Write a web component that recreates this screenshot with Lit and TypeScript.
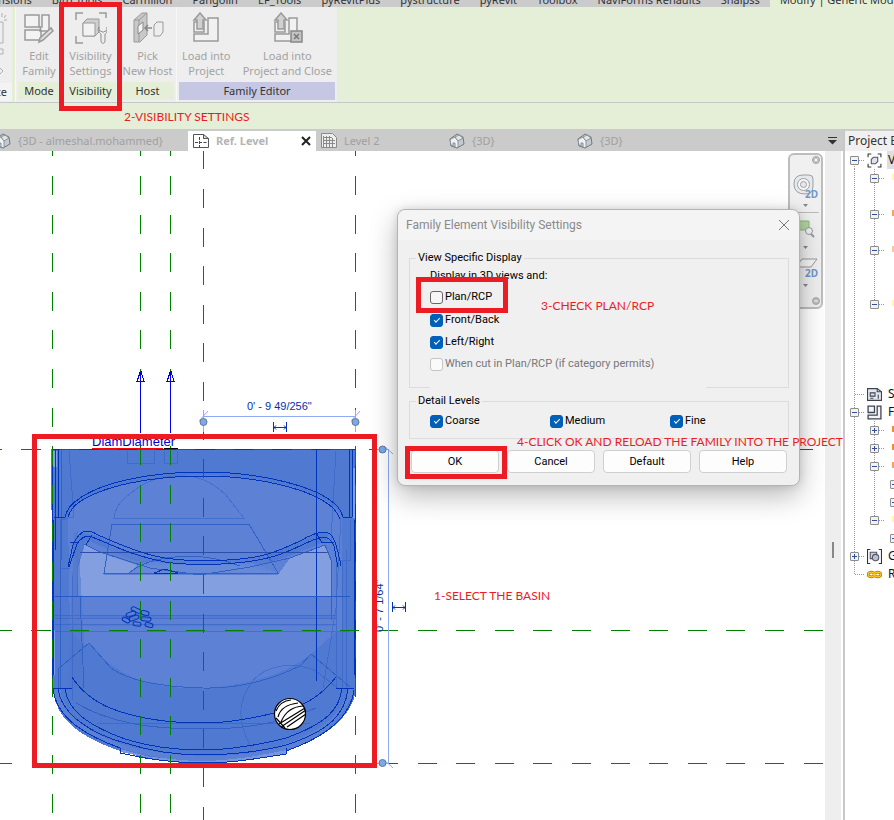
import { LitElement, html, css, svg, nothing } from "lit";
import { customElement } from "lit/decorators.js";
import { classMap } from "lit/directives/class-map.js";

const houseIcon = html`<svg class="ico16" viewBox="0 0 16 16">
  <path d="M1 6 8 1l6 3 1 7-7 4-6-2z" fill="#c4cad0" stroke="#6f7880" />
  <path d="M1 6.500 6 4l3 4v7l-3-1v-4H4v3l-2-1z" fill="#eef0f2" stroke="#7b848c" stroke-width=".8" />
  <path d="M6 4 10 2l4 3-5 3z" fill="#e2e5e8" stroke="#7b848c" stroke-width=".8" />
</svg>`;

const planIcon = html`<svg class="ico16" viewBox="0 0 16 16">
  <path d="M.5 1.500h10v4h5v9H.5z" fill="#fff" stroke="#555" />
  <path d="M10.500 1.500l5 4h-5z" fill="#ddd" stroke="#555" />
  <path d="M2 9.500h3M7 9.500h2M10.500 9.500h3" stroke="#444" fill="none" />
  <path d="M6.500 4v10" stroke="#444" fill="none" stroke-dasharray="3 1" />
</svg>`;

const levelIcon = html`<svg class="ico16" viewBox="0 0 16 16">
  <path d="M.5.500h11l4 4v10h-15z" fill="#eee" stroke="#8a8a8a" />
  <path d="M2.500 3v11M5.500 3v11M8.500 3v11M11.500 5v9M2 4.500h9M2 7.500h12M2 10.500h12" stroke="#8a8a8a" fill="none" />
</svg>`;

const ribbonIcons = {
  edit: html`<svg class="ico32" viewBox="0 0 32 32">
    <g fill="#f3f3f3" stroke="#9a9a9a" stroke-width="1.500">
      <path d="M2 3h14v12H2zM19 3h7v16h-8l-1-4h2zM2 18h14l2 2v8H2z" />
      <path d="m16 30 1-4 11-10 2 3-10 9z" fill="#ddd" />
    </g>
  </svg>`,
  visibility: html`<svg class="ico32" viewBox="0 0 32 32">
    <path d="M1 8V1h7M24 1h7v5M1 24v7h7" fill="none" stroke="#9a9a9a" stroke-width="1.500" />
    <path d="m8 11 4-4h12v13l-4 4H8z" fill="#d0d0d0" stroke="#9a9a9a" />
    <path d="M8 11h12v13H8z" fill="#f2f2f2" stroke="#9a9a9a" />
    <path d="M24 15c-2 3 0 6 2 7v7c0 3 4 3 4 0v-7c2-1 4-4 2-7v4h-2l-1 1h-2l-1-1h-2z" fill="#eee" stroke="#8f8f8f" />
  </svg>`,
  pick: html`<svg class="ico32" viewBox="0 0 32 32">
    <path d="m2 8 8-7h5v22l-7 7H2z" fill="#c8c8c8" stroke="#999" />
    <path d="M2 8h5l8-7M7 8v22" fill="none" stroke="#999" />
    <path d="m6 14 5-4v8l-5 4z" fill="#f3f3f3" stroke="#888" />
    <path d="M13 16h7M16 13l-3 3 3 3" fill="none" stroke="#888" stroke-width="1.500" />
    <path d="m22 13 3-3h6v10l-3 4h-6z" fill="#eee" stroke="#999" />
  </svg>`,
  load: html`<svg class="ico32" viewBox="0 0 32 32">
    <g fill="#f1f1f1" stroke="#9a9a9a" stroke-width="1.500">
      <path d="M4 10h10v10H4zM18 6h10v23H4v-7h14z" />
      <path d="M7 17V8H4l6-7 6 7h-3v9z" fill="#d0d0d0" />
    </g>
  </svg>`,
  loadClose: html`<svg class="ico32" viewBox="0 0 32 32">
    <g fill="#f1f1f1" stroke="#9a9a9a" stroke-width="1.500">
      <path d="M4 10h10v10H4zM18 6h8v23H4v-7h14z" />
      <path d="M7 17V8H4l6-7 6 7h-3v9z" fill="#d0d0d0" />
      <path d="M20 19h11v11H20z" fill="#c4c4c4" stroke="#888" />
      <path d="m23 22 5 5M28 22l-5 5" stroke="#777" />
    </g>
  </svg>`,
};

interface TreeRow {
  level?: number;
  open?: boolean;
  icon?: unknown;
  text?: string;
  rails: [string, string];
  mark?: string;
  selected?: boolean;
}

const cubeIcon = html`<svg class="ico14" viewBox="0 0 14 14"><path d="M1 4V1h3M10 1h3v3M1 10v3h3M10 13h3v-3" fill="none" stroke="#333" /><path d="m4 6 2-2h4v4l-2 2H4z" fill="#dde3ec" stroke="#556" /></svg>`;
const sheetIcon = html`<svg class="ico14" viewBox="0 0 14 14"><path d="M.5 1.500h9l4 3v8H.5z" fill="#e4e9f0" stroke="#3d4450" /><path d="M9.500 1.500v3h4M3 5.500h4.500v3H3zM3 10.500h3M10.500 7v4" fill="none" stroke="#3d4450" /></svg>`;
const familyIcon = html`<svg class="ico14" viewBox="0 0 14 14"><path d="M1 1h6v6H1zM9.500 1h3.500v12H1V9.500h8.500z" fill="#f2f4f8" stroke="#3d4450" stroke-width="1.200" /></svg>`;
const groupIcon = html`<svg class="ico14" viewBox="0 0 14 14"><path d="M3 .5H.5v13H3M11 .5h2.500v13H11" fill="none" stroke="#333" /><path d="M3 3h6v6H3z" fill="#c9d0db" stroke="#556" /><circle cx="8" cy="8" r="3" fill="#b9c2d0" stroke="#556" /></svg>`;
const linkIcon = html`<svg class="ico14" viewBox="0 0 14 14"><g fill="none" stroke="#a87400" stroke-width="2.600"><ellipse cx="4" cy="7" rx="3" ry="2.200" /><ellipse cx="10" cy="7" rx="3" ry="2.200" /></g><g fill="none" stroke="#ffc828"><ellipse cx="4" cy="7" rx="3" ry="2.200" /><ellipse cx="10" cy="7" rx="3" ry="2.200" /><path d="M5 7h4" /></g></svg>`;

const child = (open: boolean | undefined, last: boolean, mark: string): TreeRow =>
  ({ level: 1, open, rails: ["full", last ? "top" : "full"], mark });
const blank = (r1 = "full"): TreeRow => ({ rails: ["full", r1] });
const leaf = (): TreeRow => ({ level: 2, open: false, rails: ["full", "full"] });

const treeRows: TreeRow[] = [
  { level: 0, open: true, icon: cubeIcon, text: "Views (all)", rails: ["low", ""], selected: true },
  child(true, false, "#fff6b0"), blank(),
  child(true, false, "#f2a65a"), blank(),
  child(true, false, "#f5c9a0"), blank(), blank(),
  child(true, true, "#fff6b0"), blank(""), blank(""), blank(""), blank(""),
  { level: 0, icon: sheetIcon, text: "Sheets (all)", rails: ["full", ""] },
  { level: 0, open: true, icon: familyIcon, text: "Families", rails: ["full", ""] },
  child(false, false, "#e8912f"), child(false, false, "#e8912f"), child(true, false, "#f2a65a"),
  leaf(), leaf(),
  child(true, true, "#fff6b0"),
  { level: 2, open: false, rails: ["full", ""] },
  { level: 0, open: false, icon: groupIcon, text: "Groups", rails: ["full", ""] },
  { level: 0, icon: linkIcon, text: "Revit Links", rails: ["top", ""] },
];

@customElement("project-browser")
export class ProjectBrowser extends LitElement {
  static styles = css`
    :host { display: flex; flex-direction: column; background: #fff; overflow: hidden; }
    .title { height: 20px; flex: none; background: #f0f0f0; color: #333; font-size: 12px; line-height: 20px; padding-left: 3px; white-space: nowrap; }
    .row { display: flex; height: 18px; align-items: stretch; white-space: nowrap; font-size: 12px; line-height: 18px; color: #111; }
    .cell { flex: 0 0 20px; display: flex; align-items: center; position: relative; }
    .cell::before { content: ""; position: absolute; left: 9px; top: 0; bottom: 0; width: 1px; }
    .full::before, .top::before, .low::before { background: repeating-linear-gradient(#999 0 1px, transparent 1px 2px); }
    .top::before { bottom: 9px; }
    .low::before { top: 9px; }
    .stub::after { content: ""; position: absolute; left: 10px; right: 0; top: 9px; height: 1px; background: repeating-linear-gradient(90deg, #999 0 1px, transparent 1px 2px); }
    .toggle { position: relative; z-index: 1; width: 9px; height: 9px; margin: 1px 0 0 5px; padding: 0; border: 1px solid #8c8c8c; border-radius: 1px; background: linear-gradient(#2f4f9a, #2f4f9a) center / 5px 1px no-repeat #f3f3f3; }
    .plus { background: linear-gradient(#2f4f9a, #2f4f9a) center / 5px 1px no-repeat, linear-gradient(#2f4f9a, #2f4f9a) center / 1px 5px no-repeat #f3f3f3; }
    .ico14 { width: 15px; height: 15px; margin: 0 5px 0 2px; flex: none; align-self: center; }
    .name { padding-left: 1px; }
    .selected { background: #dedede; }
    .mark { width: 6px; height: 6px; margin: 5px 0 0 7px; flex: none; }
  `;
  private cell(i: number, r: TreeRow) {
    const here = r.level === i;
    const rail = i < 2 ? r.rails[i] : "";
    return html`<span class=${classMap({ cell: true, full: rail === "full", top: rail === "top", low: rail === "low", stub: here })}>
      ${here && r.open !== undefined
        ? html`<button class=${classMap({ toggle: true, plus: !r.open })} aria-label=${r.open ? "Collapse" : "Expand"}></button>`
        : nothing}</span>`;
  }
  render() {
    return html`<div class="title">Project Browser</div>
      ${treeRows.map((r) => html`<div class="row">
        ${this.cell(0, r)}
        ${r.level === 0 ? html`${r.icon}<span class=${classMap({ name: true, selected: !!r.selected })}>${r.text}</span>` : html`${this.cell(1, r)}`}
        ${r.level === 2 ? this.cell(2, r) : nothing}
        ${r.mark ? html`<svg class="mark" viewBox="0 0 6 6"><rect width="6" height="6" fill=${r.mark} /></svg>` : nothing}
      </div>`)}`;
  }
}

@customElement("visibility-dialog")
export class VisibilityDialog extends LitElement {
  static styles = css`
    :host { display: block; box-sizing: border-box; background: #f0f0f0; border: 1px solid #b4b4b4; border-radius: 8px; box-shadow: 0 10px 28px rgba(0, 0, 0, 0.28), 0 0 8px rgba(0, 0, 0, 0.12); font: 11px/16px Roboto, sans-serif; color: #000; }
    header { display: flex; justify-content: space-between; align-items: center; height: 30px; padding: 0 9px 0 8px; background: #f4f4f4; border-radius: 8px 8px 0 0; }
    h1 { margin: 0; font: 12px/16px Roboto, sans-serif; color: #8a8a8a; }
    .close { border: 0; padding: 0; background: none; width: 12px; height: 12px; }
    .close svg { display: block; width: 12px; height: 12px; }
    .body { padding: 10px 10px 12px 11px; }
    fieldset { position: relative; box-sizing: border-box; margin: 0; border: 1px solid #dcdcdc; padding: 0 20px; min-width: 0; }
    legend { margin-left: -14px; padding: 0 2px; line-height: 16px; }
    .views { height: 138px; }
    .views::after { content: ""; position: absolute; left: 20px; right: 82px; bottom: -1px; height: 1px; background: #f0f0f0; }
    .levels { height: 46px; margin-top: 5px; }
    p { margin: 2px 0; line-height: 16px; }
    .check { display: flex; align-items: center; gap: 2px; height: 22px; width: max-content; white-space: nowrap; }
    .off { color: #777; }
    input { appearance: none; box-sizing: border-box; width: 13px; height: 13px; margin: 0; border: 1px solid #666; border-radius: 3px; background: #f6f6f6; display: grid; place-items: center; }
    input:checked { background: #005fb8; border-color: #005fb8; }
    input:checked::after { content: ""; width: 5px; height: 2px; border: solid #fff; border-width: 0 0 1px 1px; transform: rotate(-45deg); margin-bottom: 2px; }
    input:disabled { border-color: #c4c4c4; background: #fafafa; }
    .detail { display: grid; grid-template-columns: repeat(3, 120px); padding-top: 1px; }
    .buttons { display: grid; grid-template-columns: repeat(4, 1fr); gap: 8px; margin: 11px 2px 0; }
    .buttons button { height: 23px; border: 1px solid #cfcfcf; border-radius: 4px; background: #fdfdfd; padding: 0; font: inherit; color: #000; }
    .target { position: relative; width: max-content; margin-bottom: 1px; }
    .mark { position: absolute; border: 5px solid #ed1c24; pointer-events: none; }
    .markPlan { left: -14px; top: -9px; width: 82px; height: 26px; }
    .okCell { position: relative; display: grid; }
    .markOk { left: -6px; top: -4px; right: -8px; height: 23px; }
    .note { position: absolute; color: #ed1c24; font: 12px/16px Lato, sans-serif; white-space: nowrap; }
    .note3 { left: 143px; top: 88px; }
    .note4 { left: 119px; top: 224px; }
  `;
  private check(label: string, checked: boolean, disabled = false) {
    return html`<label class=${classMap({ check: true, off: disabled })}><input type="checkbox" .checked=${checked} ?disabled=${disabled} />${label}</label>`;
  }
  render() {
    return html`
      <header><h1>Family Element Visibility Settings</h1>
        <button class="close" aria-label="Close"><svg viewBox="0 0 12 12"><path d="m1 1 10 10M11 1 1 11" stroke="#777" fill="none" /></svg></button>
      </header>
      <div class="body">
        <fieldset class="views"><legend>View Specific Display</legend>
          <p>Display in 3D views and:</p>
          <div class="target">${this.check("Plan/RCP", false)}<span class="mark markPlan"></span></div>
          ${this.check("Front/Back", true)} ${this.check("Left/Right", true)}
          ${this.check("When cut in Plan/RCP (if category permits)", false, true)}
        </fieldset>
        <fieldset class="levels"><legend>Detail Levels</legend>
          <div class="detail">${this.check("Coarse", true)}${this.check("Medium", true)}${this.check("Fine", true)}</div>
        </fieldset>
        <div class="buttons">
          <div class="okCell"><button>OK</button><span class="mark markOk"></span></div>
          <button>Cancel</button><button>Default</button><button>Help</button>
        </div>
      </div>
      <span class="note note3">3-CHECK PLAN/RCP</span>
      <span class="note note4">4-CLICK OK AND RELOAD THE FAMILY INTO THE PROJECT</span>`;
  }
}

const rearLip = "M65 517 Q68 506 76 501 C100 482 150 472 203 472 C262 472 318 487 336 505 Q341 510 343 517";
const rearLipInner = "M68 517 Q71 508 78 503 C102 486 150 476 203 476 C260 476 314 490 333 508 Q338 513 340 519";
const frontLip = "M68 567 L73 545 Q79 532 86 531 Q92 531 98 535 C150 558 165 560 203 561 C265 560 275 552 300 541 C312 534 325 528 331 535 Q336 540 341 566";
const frontLipInner = "M69 567 L77 544 Q82 536 89 536 C110 543 125 554 165 562 C200 567 250 564 275 556 C300 548 312 538 324 537 Q331 538 334 546 L338 567";

/* Drain slots: centre, half width and tilt of each one. */
const slots = [[136, 610, 5, 25], [145, 613, 4, 15], [131, 614, 5, -20], [134, 618, 5, -20], [126, 620, 4, 30], [146, 619, 5, 5], [137, 624, 4, 10], [149, 625, 4, 15]];

@customElement("model-view")
export class ModelView extends LitElement {
  static styles = css`
    :host { display: block; overflow: hidden; background: #fff; }
    .drawing { display: block; width: 100%; height: 100%; }
    .ref { stroke: #008000; stroke-width: 1; stroke-dasharray: 19 19.600; fill: none; }
    .ink { stroke: #0034b8; fill: none; }
    .faint { stroke: #3262c6; fill: none; }
    .soft { opacity: 0.55; }
    .dim { stroke: #8fabf5; fill: none; }
    .grip { fill: #79aaf0; stroke: #68768c; }
    .label { font: 11px "Liberation Sans", Arial, sans-serif; fill: #0033a8; }
    .diam { font: 13px "Liberation Sans", Arial, sans-serif; fill: #0000cc; }
    .note { font: 12px Lato, sans-serif; fill: #ed1c24; }
  `;
  render() {
    const grips = [[203.5, 422], [355.5, 422], [382.5, 449.5], [382.5, 763]];
    return html`<svg class="drawing"><g transform="translate(0 -151)">
      <g shape-rendering="crispEdges">
        <path fill="#5079d1" d="M51 449H356V690C352 720 320 740 286 751C262 759 230 763 203 763S150 761 120 751C80 737 56 720 53 690Z" />
        <path fill="#5c81d5" d="M68 517C74 490 150 475 203 475S330 490 342 517V632H336L311 654C290 672 250 686 203 688S115 678 89 643L84 646 70 630Z" />
        <path fill="#5079d1" d="M77 566 85 541 90 541C130 560 150 570 203 571S290 556 328 540V532L318 533C275 555 250 561 203 561S130 555 98 536L82 533 73 548Z" />
        <path fill="#839fe0" d="M77 570 84 544 100 552 137 565 129 573H104L104 575H278L290 558 325 545 331 560V596H78Z" />
        <path fill="#6689d8" d="M129 573 145 562 203 564 252 563 278 573Z" />
        <path fill="#5c81d5" d="M104 573 112 524 249 524 278 573 240 565H160L137 565 106 555Z" opacity=".5" />
        <path fill="#4e76cc" d="M55 615H336V618H55zM55 624H336V626H55zM74 533 78 531 84 640 80 688H68z" opacity=".55" />
        <path fill="#7697df" d="M120 749 150 757 203 761 286 750V754L240 761 203 764 170 762 120 752Z" />
        <path fill="#5b80d4" d="M53 690Q58 718 90 735L120 748C150 758 180 761 203 761S260 756 286 750Q340 733 354 690L348 688Q343 716 310 733C270 754 240 756 203 756C140 754 110 742 90 729Q64 713 60 688Z" />
        <path fill="#83a2e6" d="M53 451h4v16h-4zM353 468h3v50h-3zM53 630h2v45h-2z" />
        <g class="faint">
          <path d="M112 524H249L278 573H104Z" />
          <path class="soft" d="M114 518 Q116 503 130 494 C145 480 160 476 185 476 Q205 476 225 494 L244 518ZM127 451V463H154V451M164 451V463H177V451M69 451 74 517 60 520M336 451 331 540M341 517 336 608 323 688" />
          <path d="M58 669 89 643 111 668C130 682 165 687 203 688S275 678 300 666L311 654 350 687M58 669V688M80 596 84 688M61 449V560Q60 640 61 688" />
          <path class="soft" d="M72 575V700M336 560V688M342 560V688M346 550V688M70 568H60V520M338 560H350V520M55 615.500H336M55 618.500H336M55 624.500H336M55 631.500H350M97 723.500H310" />
          <path d="M76 703C110 723 150 729 203 729S290 720 316 708" />
          <path d="M129 573C150 555 200 550 240 566M84 544 100 552 150 568 200 575 250 567 290 558 325 545 331 560V620" />
          <path class="soft" d="M251 747C235 718 240 698 252 682S292 660 316 671L340 690M77 596V570L84 545" />
        </g>
        <path d="M80 552.500H327" stroke="#2c4eaa" fill="none" />
        <g class="ink">
          <path d=${rearLip} /><path d=${rearLipInner} />
          <path d=${frontLip} /><path d=${frontLipInner} />
          <path d="M53 449.500H356M52.500 449V688M53.500 520V675M55.500 449V550M58.500 449V517M54 517.500H65M343 517.500H352M349.500 449V517M352.500 449V517M355.500 449V688M354.500 520V675M316.500 449V681M54 688.500H72M336 688.500H354" />
          <path d="M53 688C56 720 90 737 120 748M58 688C61 716 95 735 125 743C150 751 180 755 203 755S260 752 286 745C330 731 346 713 348 688M65 688C68 714 95 728 125 739C150 747 180 750 203 750S260 745 286 738C325 724 340 710 342 688M354 690C350 720 320 739 286 751" />
          <path d="M72 677C80 690 95 702 110 708C140 720 175 723 203 723S265 716 285 710Q315 704 336 677M120 748V753C150 760 175 763 203 763S255 759 286 754V748M86 545 92 535M78 542 70 543M317 534 322 543 334 542M154 573 165 569 178 573Z" />
        </g>
        <path d="M55 596.500H350" stroke="#2559c6" fill="none" />
      </g>
      <g class="ink">${slots.map(([x, y, w, a]) => svg`<rect x=${x - w} y=${y - 2} width=${w * 2} height="4" rx="2" transform="rotate(${a} ${x} ${y})" />`)}</g>
      <g shape-rendering="crispEdges">
        <g class="ref">
          <path d="M52.500 137.400V820M140.500 137.400V820M170.500 137.400V820M355.500 137.400V820M203.500 150.400V820" />
          <path d="M-17.100 449.500H823M-7.100 630.500H823M-7.100 763.500H20M378.900 763.500H823" />
        </g>
        <g stroke="#0000e6" fill="none"><path d="M140.500 433V371L137 381.500H144L141 371M170.500 433V371L167 381.500H174L171 371" /></g>
      </g>
      <g stroke="#000" stroke-width="1.200"><circle cx="290" cy="714" r="15.500" fill="#fff" />
        <path fill="none" d="M276 711Q280 701 291 700M278 717Q281 705 298 703M281 722Q287 707 303 706M279 724 305 708M281 727 306 710M287 727 306 714M276 718 285 728" /></g>
      <g class="dim"><path d="M203 416.500H356M203.500 410V432M355.500 410V432M199 421 208 411M351 421 360 411M388.500 449V763M376 449.500H389M376 763.500H389M384 446 393 454M384 760 393 768" /></g>
      ${grips.map(([x, y]) => svg`<circle class="grip" cx=${x} cy=${y} r="3.500" />`)}
      <g class="ink"><path d="M273.500 422V432M286.500 422V432M273 427.500H287M276 425.500 274 427.500 276 429.500M284 425.500 286 427.500 284 429.500M392.500 602V612M405.500 602V612M392 607.500H406M395 605.500 393 607.500 395 609.500M403 605.500 405 607.500 403 609.500" /></g>
      <text class="label" x="247" y="410">0' - 9 49/256"</text>
      <text class="label" transform="translate(383 632) rotate(-90)">0' - 7 1/64"</text>
      <text class="diam" x="92" y="446">DiamDiameter</text>
      <path d="M92 448.500H163" stroke="#ff0000" /><path d="M164 448.500H178" stroke="#000" />
      <rect x="34.500" y="436.500" width="340" height="329" fill="none" stroke="#ed1c24" stroke-width="5" />
      <text class="note" x="434" y="600">1-SELECT THE BASIN</text>
    </g></svg>`;
  }
}

@customElement("app-root")
export class AppRoot extends LitElement {
  static styles = css`
    :host { display: flex; flex-direction: column; height: 100vh; overflow: hidden; background: #fff; font: 12px/15px "Noto Sans", sans-serif; }
    .tabs { display: flex; flex: none; height: 7px; background: #cbcbcb; overflow: hidden; align-items: flex-end; color: #333; font-size: 11px; line-height: 15px; }
    .tabs a { color: inherit; text-decoration: none; white-space: nowrap; flex: none; padding: 0 10px; }
    .tabs a:first-child { margin-left: -34px; }
    .tabs .current { background: #e5efd7; flex: 1 0 0; margin-left: auto; }
    .ribbon { display: flex; flex: none; height: 95px; background: #e5efd7; border-bottom: 1px solid #c8c8c8; color: #333; }
    .panel { position: relative; display: flex; flex-direction: column; background: #eee; padding: 0 2px 2px; }
    .panel + .panel { border-left: 1px solid #f8f8f8; }
    .cut { width: 12px; overflow: hidden; padding: 0 0 2px; margin-right: 3px; box-sizing: border-box; }
    .cut .tools { justify-content: flex-start; }
    .tools { display: flex; flex: 1; justify-content: center; }
    .tool { border: 0; background: none; padding: 5px 0 0; font: 11px/15px "Noto Sans", sans-serif; color: #a2a2a2; display: flex; flex-direction: column; align-items: center; white-space: nowrap; }
    .tool span { white-space: pre; }
    .ico32 { width: 32px; height: 32px; margin-bottom: 4px; flex: none; }
    .caption { height: 18px; line-height: 18px; text-align: center; background: #e5efd7; font-size: 11px; color: #333; white-space: nowrap; }
    .family .caption { background: #c6c7e3; }
    .cut .caption { background: #f3f3f3; display: flex; justify-content: flex-end; padding-right: 5px; }
    .mode { width: 42px; }
    .vis { width: 51px; }
    .host { width: 53px; }
    .family { width: 156px; }
    .family .tools { justify-content: space-between; padding: 0 3px; }
    .frame { position: absolute; left: -4px; right: -4px; top: -5px; bottom: -9px; border: 5px solid #ed1c24; pointer-events: none; z-index: 2; }
    .options { flex: none; height: 26px; background: #e5efd7; padding: 2px 0 0 124px; box-sizing: border-box; display: flex; align-items: center; color: #ed1c24; font: 12px/16px Lato, sans-serif; }
    .work { display: flex; flex: 1; min-height: 0; }
    .views { display: flex; flex-direction: column; flex: 1; min-width: 0; position: relative; z-index: 1; }
    .doctabs { display: flex; flex: none; height: 22px; box-sizing: border-box; padding-top: 2px; background: #cbcbcb; color: #a0a0a0; font-size: 11px; line-height: 20px; overflow: hidden; }
    .doc { display: flex; align-items: center; gap: 7px; width: 128px; box-sizing: border-box; padding: 0 4px 0 5px; white-space: nowrap; flex: none; }
    .doc a { color: inherit; text-decoration: none; }
    .first { width: 188px; padding-left: 0; }
    .first .ico16 { margin-left: -5px; }
    .active { background: #fff; color: #b4b4b4; font-weight: 700; }
    .ico16 { width: 16px; height: 16px; flex: none; }
    .x { margin-left: auto; border: 0; background: none; padding: 0; width: 12px; height: 12px; }
    .x svg { display: block; width: 12px; height: 12px; }
    .drop { margin: 0 5px 0 auto; border: 0; background: none; padding: 0; width: 11px; height: 20px; flex: none; display: flex; align-items: center; }
    .drop svg { width: 11px; height: 8px; }
    .canvas { position: relative; flex: 1; min-height: 0; display: flex; }
    model-view { flex: 1; min-width: 0; }
    .dock { flex: 0 0 16px; background: #eee; display: flex; justify-content: center; padding-top: 391px; box-sizing: border-box; margin-right: 2px; }
    .dock i { width: 2px; height: 16px; background: #888; }
    .nav { position: absolute; left: 788px; top: 2px; width: 35px; height: 156px; box-sizing: border-box; border: 2px solid #bdbdbd; border-radius: 6px; background: #f0f0f0; }
    .nav svg { display: block; width: 31px; height: 152px; }
    .two { font: bold 10px "Noto Sans", sans-serif; fill: #7098c8; }
    visibility-dialog { position: absolute; left: 397px; top: 58px; width: 403px; height: 277px; }
    project-browser { flex: 0 0 51px; padding-top: 2px; border-left: 2px solid #c8c8c8; box-sizing: border-box; box-shadow: inset 0 2px #cbcbcb; }
  `;
  private tool(icon: unknown, text: string) {
    return html`<button class="tool">${icon}<span>${text}</span></button>`;
  }
  render() {
    const names = ["Extensions", "Bird Tools", "Carmilion", "Pangolin", "EF_Tools", "pyRevitPlus", "pystructure", "pyRevit", "Toolbox", "NaviForms Renaults", "Snaipss"];
    return html`
      <nav class="tabs">${names.map((n) => html`<a href="#">${n}</a>`)}<a class="current" href="#">Modify | Generic Models</a></nav>
      <div class="ribbon">
        <section class="panel cut"><div class="tools"><svg width="12" height="76" viewBox="0 0 12 76"><g fill="none" stroke="#b0b0b0"><path d="M0 15h3v21H0M2 6v4M6 8 4 11M7 13H4M0 42h3v5H0M0 61l3 3-3 3" /></g></svg></div><div class="caption">te</div></section>
        <section class="panel mode"><div class="tools">${this.tool(ribbonIcons.edit, "Edit\nFamily")}</div><div class="caption">Mode</div></section>
        <section class="panel vis"><div class="tools">${this.tool(ribbonIcons.visibility, "Visibility\nSettings")}</div><div class="caption">Visibility</div><span class="frame"></span></section>
        <section class="panel host"><div class="tools">${this.tool(ribbonIcons.pick, "Pick\nNew Host")}</div><div class="caption">Host</div></section>
        <section class="panel family"><div class="tools">${this.tool(ribbonIcons.load, "Load into\nProject")}${this.tool(ribbonIcons.loadClose, "Load into\nProject and Close")}</div><div class="caption">Family Editor</div></section>
      </div>
      <div class="options">2-VISIBILITY SETTINGS</div>
      <div class="work">
        <main class="views">
          <nav class="doctabs">
            <div class="doc first">${houseIcon}<a href="#">{3D - almeshal.mohammed}</a></div>
            <div class="doc active">${planIcon}<a href="#">Ref. Level</a><button class="x" aria-label="Close view"><svg viewBox="0 0 12 12"><path d="m2 2 8 8M10 2l-8 8" stroke="#222" stroke-width="2" /></svg></button></div>
            <div class="doc">${levelIcon}<a href="#">Level 2</a></div>
            <div class="doc">${houseIcon}<a href="#">{3D}</a></div>
            <div class="doc">${houseIcon}<a href="#">{3D}</a></div>
            <button class="drop" aria-label="List views"><svg viewBox="0 0 11 8"><path d="M1 .500h9" stroke="#333" /><path d="M1 3h9L5.500 7.500z" fill="#333" /></svg></button>
          </nav>
          <div class="canvas">
            <model-view></model-view>
            <div class="dock"><i></i></div>
            <aside class="nav"><svg viewBox="0 0 31 152">
              <g fill="none" stroke="#aaa"><circle cx="26" cy="5" r="3.500" fill="#bbb" /><path d="m24.500 3.500 3 3M27.500 3.500l-3 3" stroke="#fff" /><circle cx="26" cy="146" r="3.500" fill="#bbb" /><path d="M24 146h4" stroke="#fff" /></g>
              <path d="M4 29Q4 20 13 20h6q4 0 4 4v7q0 8-8 8-11 0-11-10z" fill="#e6e8ec" stroke="#9aa0a8" /><circle cx="13.500" cy="29.500" r="6" fill="#f6f6f6" stroke="#9aa0a8" /><circle cx="13.500" cy="29.500" r="3" fill="#e6e8ec" stroke="#9aa0a8" />
              <text class="two" x="15" y="43">2D</text><text class="two" x="15" y="122">2D</text>
              <path d="M13 49h5l-2.500 3zM13 91h5l-2.500 3zM13 129h5l-2.500 3z" fill="#888" /><path d="M2 57.500h27" stroke="#bbb" />
              <path d="M4 66h15v9H4z" fill="#b4d3a2" stroke="#8cb878" /><circle cx="19" cy="76" r="3.500" fill="#eef2f6" stroke="#999" /><path d="m21 79 3 3" stroke="#999" stroke-width="2" />
              <path d="m6 112 6-8h15l-6 8z" fill="#f6f6f6" stroke="#999" />
            </svg></aside>
            <visibility-dialog role="dialog"></visibility-dialog>
          </div>
        </main>
        <project-browser></project-browser>
      </div>`;
  }
}
